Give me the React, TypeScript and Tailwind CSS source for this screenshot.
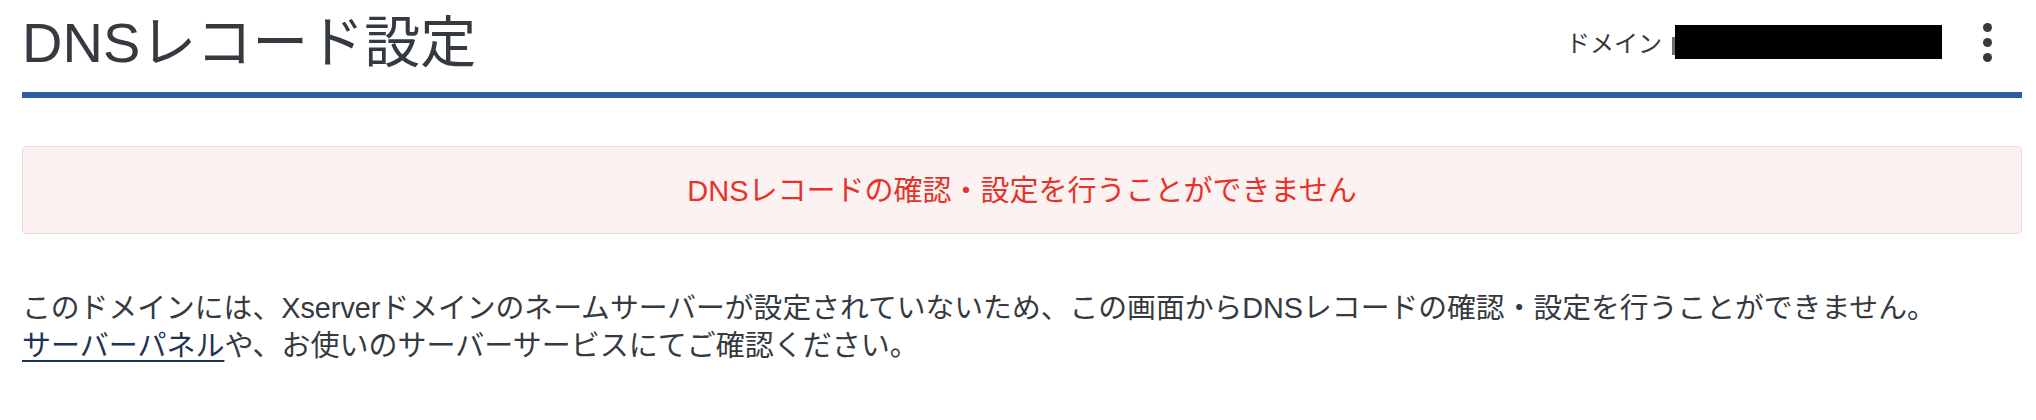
import React from "react";

const FONT = '"Liberation Sans", "Noto Sans CJK JP", sans-serif';

export default function App() {
  return (
    <div
      className="w-[2036px] h-[420px] bg-white pl-[22px] pr-[14px] text-[#343a40]"
      style={{ fontFamily: FONT }}
    >
      <header className="flex h-[84px] items-center justify-between">
        <h1 className="text-[56px] leading-none font-normal text-[#343a40] mt-[2px]">
          DNSレコード設定
        </h1>
        <div className="flex items-center">
          <span className="text-[24px] leading-none text-[#343a40] mt-[4px]">ドメイン</span>
          <div className="ml-[10px] flex items-center">
            <div className="w-[3px] h-[18px] bg-[#6b6f73] mt-[8px]" />
            <div className="w-[267px] h-[34px] bg-black" />
          </div>
          <div className="ml-[41px] mr-[30px] flex flex-col items-center gap-[6px]">
            <span className="block w-[9px] h-[9px] rounded-full bg-[#343a40]" />
            <span className="block w-[9px] h-[9px] rounded-full bg-[#343a40]" />
            <span className="block w-[9px] h-[9px] rounded-full bg-[#343a40]" />
          </div>
        </div>
      </header>
      <div className="mt-[8px] h-[6px] bg-[#2e5e9e]" />

      <div className="mt-[48px] h-[88px] flex items-center justify-center rounded-[4px] border border-[#f2d9d9] bg-[#fdf2f2]">
        <p className="text-[29px] leading-none text-[#e7322a] mt-[2px]">
          DNSレコードの確認・設定を行うことができません
        </p>
      </div>

      <div className="mt-[55px] text-[29px] leading-[38px] text-[#343a40]">
        <p className="text-[28.8px]">
          このドメインには、Xserverドメインのネームサーバーが設定されていないため、この画面からDNSレコードの確認・設定を行うことができません。
        </p>
        <p>
          <a
            href="#"
            className="text-[#1b3557] underline decoration-2 underline-offset-[4px] decoration-[#1b3557]"
          >
            サーバーパネル
          </a>
          や、お使いのサーバーサービスにてご確認ください。
        </p>
      </div>
    </div>
  );
}
